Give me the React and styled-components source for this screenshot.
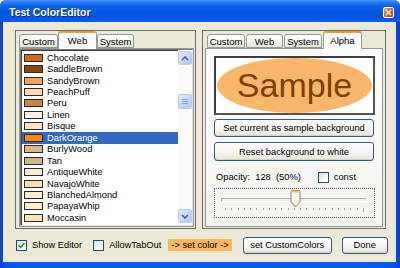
import React from "react";
import styled, { createGlobalStyle } from "styled-components";

const GlobalStyle = createGlobalStyle`
  html, body { margin: 0; padding: 0; background: #ffffff; }
  body {
    font-family: "Liberation Sans", Arial, sans-serif;
    font-size: 9.3px;
    color: #000;
  }
  * { box-sizing: border-box; }
`;

const Window = styled.div`
  width: 400px;
  height: 268px;
  display: flex;
  flex-direction: column;
  background: linear-gradient(90deg, #0a3fd0, #0757e6 2%, #0757e6 98%, #0a3fd0);
  border-radius: 6px 6px 0 0;
  overflow: hidden;
`;

const TitleBar = styled.div`
  height: 22px;
  flex: none;
  display: flex;
  align-items: center;
  justify-content: space-between;
  padding: 0 6px 0 9px;
  background: linear-gradient(
    #4a95fa 0%,
    #2a7cf7 10%,
    #0a61ea 28%,
    #0456e3 55%,
    #0454e2 80%,
    #0a5df0 100%
  );
`;

const Title = styled.span`
  color: #fff;
  font-weight: bold;
  font-size: 10.5px;
  text-shadow: 1px 1px 0 #0b2f8f;
  margin-top: 1px;
`;

const CloseButton = styled.div`
  width: 11px;
  height: 11px;
  margin-top: 2px;
  border: 1px solid #fff;
  border-radius: 2px;
  background: linear-gradient(135deg, #f5a58e, #e05a34 45%, #c9401c);
  display: flex;
  align-items: center;
  justify-content: center;
`;

const Body = styled.div`
  flex: 1;
  margin: 0 4px 6px 3px;
  background: #ece9d8;
  padding: 8px 10px 0 12px;
  display: flex;
  flex-direction: column;
`;

const Panels = styled.div`
  display: flex;
  gap: 6px;
  height: 199px;
`;

const Panel = styled.div`
  width: ${(p) => p.$w}px;
  border: 1px solid #6f6d64;
  padding: 0 ${(p) => p.$pr}px 1px ${(p) => p.$pl}px;
  display: flex;
  flex-direction: column;
`;

const TabStrip = styled.div`
  height: 17px;
  flex: none;
  display: flex;
  align-items: flex-end;
  gap: ${(p) => p.$gap}px;
  padding-left: ${(p) => p.$pl}px;
  position: relative;
  z-index: 1;
`;

const Tab = styled.div`
  width: ${(p) => p.$w}px;
  height: ${(p) => (p.$active ? 18 : 14)}px;
  margin-bottom: ${(p) => (p.$active ? -1 : 0)}px;
  border: 1px solid #919b9c;
  border-bottom: ${(p) => (p.$active ? "none" : "1px solid #919b9c")};
  border-top: ${(p) => (p.$active ? "2px solid #e8a13a" : "1px solid #919b9c")};
  border-radius: 3px 3px 0 0;
  background: ${(p) =>
    p.$active ? "#fcfcfe" : "linear-gradient(#ffffff, #f3f2ec 60%, #e4e2d8)"};
  display: flex;
  align-items: center;
  justify-content: center;
  padding-bottom: ${(p) => (p.$active ? 2 : 0)}px;
  font-size: 9.5px;
`;

const TabPage = styled.div`
  flex: 1;
  border: 1px solid #919b9c;
  background: ${(p) => (p.$plain ? "#fcfcfe" : "linear-gradient(#fcfcfe, #f4f3ee)")};
  display: flex;
  flex-direction: column;
  padding: ${(p) => p.$pad};
`;

const ListBox = styled.div`
  flex: 1;
  display: flex;
  background: #fff;
  border: 1px solid;
  border-color: #7a7868 #e4e2d6 #e4e2d6 #7a7868;
  box-shadow: inset 1px 1px 0 #3f3e38;
`;

const Items = styled.div`
  flex: 1;
  padding-top: 2px;
  padding-left: 1px;
  overflow: hidden;
`;

const Row = styled.div`
  height: 11.45px;
  display: flex;
  align-items: center;
  gap: 4px;
  padding-left: 2px;
  background: ${(p) => (p.$sel ? "#316ac5" : "transparent")};
  color: ${(p) => (p.$sel ? "#fff" : "#000")};
  white-space: nowrap;
`;

const Swatch = styled.span`
  flex: none;
  width: 19px;
  height: 8px;
  border: 1px solid #2a2a2a;
  background: ${(p) => p.$c};
`;

const ScrollBar = styled.div`
  width: 14px;
  flex: none;
  display: flex;
  flex-direction: column;
  background: #fbfbf8;
  padding-top: 1px;
  padding-bottom: 2px;
`;

const ScrollButton = styled.div`
  width: 14px;
  height: 14px;
  flex: none;
  border: 1px solid #b7cbf5;
  border-radius: 2px;
  background: linear-gradient(135deg, #e2ebfd, #c0d3fb 60%, #b2c8f8);
  display: flex;
  align-items: center;
  justify-content: center;
`;

const Thumb = styled(ScrollButton)`
  height: 15px;
  margin-top: ${(p) => p.$top}px;
  margin-bottom: auto;
`;

const SampleBox = styled.div`
  height: 59px;
  flex: none;
  border: 2px solid;
  border-color: #3e3d38 #56554e #56554e #3e3d38;
  background: #fff;
  padding: 0 1px;
  display: flex;
`;

const Ellipse = styled.div`
  flex: 1;
  border-radius: 50%;
  background: #fab76c;
  display: flex;
  align-items: center;
  justify-content: center;
  font-size: 34px;
  color: #7a4100;
  padding-bottom: 1px;
`;

const XpButton = styled.button`
  width: ${(p) => p.$w}px;
  height: ${(p) => p.$h}px;
  margin-top: ${(p) => p.$mt || 0}px;
  margin-left: ${(p) => p.$ml || 0}px;
  flex: none;
  font-family: inherit;
  font-size: 9.3px;
  color: #000;
  padding: 0;
  border: 1px solid #2f5b8e;
  border-radius: 3px;
  background: linear-gradient(#ffffff, #f6f5f1 55%, #e6e3d9);
  box-shadow: inset 0 -1px 0 #d6d0c5;
`;

const OptionRow = styled.div`
  display: flex;
  align-items: center;
  height: 12px;
  margin-top: 10px;
  padding-left: 2px;
`;

const Caption = styled.span`
  white-space: pre;
  font-size: ${(p) => p.$fs || 9.3}px;
`;

const CheckBox = styled.span`
  width: 11px;
  height: 11px;
  flex: none;
  border: 1px solid #1c5180;
  background: linear-gradient(135deg, #dcdbd3, #f6f6f3 60%, #ffffff);
  display: flex;
  align-items: center;
  justify-content: center;
  margin-left: ${(p) => p.$ml || 0}px;
  margin-right: ${(p) => p.$mr || 5}px;
`;

const Trackbar = styled.div`
  height: 30px;
  margin-top: 5px;
  flex: none;
  border: 1px dotted #555;
  position: relative;
  padding: 9px 7px 0 6px;
`;

const Track = styled.div`
  height: 4px;
  border: 1px solid;
  border-color: #b4b3a8 #ffffff #ffffff #b4b3a8;
  background: #f0efe8;
`;

const Ticks = styled.div`
  display: flex;
  justify-content: space-between;
  margin: 6px 3px 0 4px;
`;

const Tick = styled.span`
  width: 1px;
  height: ${(p) => (p.$end ? 4 : 2)}px;
  background: #a8a79d;
`;

const TrackThumb = styled.svg`
  position: absolute;
  left: 75px;
  top: 1px;
`;

const BottomRow = styled.div`
  height: 20px;
  margin-top: 6px;
  display: flex;
  align-items: center;
  padding-left: 1px;
`;

const ColorTag = styled.span`
  height: 12px;
  padding: 0 3px;
  margin-left: 7px;
  background: #fbb661;
  display: flex;
  align-items: center;
  white-space: pre;
`;

const colors = [
  ["Chocolate", "#d2691e"],
  ["SaddleBrown", "#8b4513"],
  ["SandyBrown", "#f4a460"],
  ["PeachPuff", "#ffdab9"],
  ["Peru", "#cd853f"],
  ["Linen", "#faf0e6"],
  ["Bisque", "#ffe4c4"],
  ["DarkOrange", "#ff8c00"],
  ["BurlyWood", "#deb887"],
  ["Tan", "#d2b48c"],
  ["AntiqueWhite", "#faebd7"],
  ["NavajoWhite", "#ffdead"],
  ["BlanchedAlmond", "#ffebcd"],
  ["PapayaWhip", "#ffefd5"],
  ["Moccasin", "#ffe4b5"],
];

function Arrow({ down }) {
  return (
    <svg width="8" height="5" viewBox="0 0 8 5">
      <path
        d={down ? "M1 1 L4 4 L7 1" : "M1 4 L4 1 L7 4"}
        fill="none"
        stroke="#4d6185"
        strokeWidth="1.6"
      />
    </svg>
  );
}

function Check() {
  return (
    <svg width="7" height="7" viewBox="0 0 7 7">
      <path d="M0.5 3.2 L2.6 5.4 L6.5 1" fill="none" stroke="#21a121" strokeWidth="1.6" />
    </svg>
  );
}

function App() {
  const ticks = Array.from({ length: 23 });
  return (
    <>
      <GlobalStyle />
      <Window>
        <TitleBar>
          <Title>Test ColorEditor</Title>
          <CloseButton>
            <svg width="7" height="7" viewBox="0 0 7 7">
              <path d="M1 1 L6 6 M6 1 L1 6" stroke="#fff" strokeWidth="1.5" />
            </svg>
          </CloseButton>
        </TitleBar>
        <Body>
          <Panels>
            <Panel $w={181} $pl={3} $pr={1}>
              <TabStrip $gap={0} $pl={0}>
                <Tab $w={39}>Custom</Tab>
                <Tab $w={39} $active>
                  Web
                </Tab>
                <Tab $w={37}>System</Tab>
              </TabStrip>
              <TabPage $pad="0" $plain>
                <ListBox>
                  <Items>
                    {colors.map(([name, c]) => (
                      <Row key={name} $sel={name === "DarkOrange"}>
                        <Swatch $c={c} />
                        {name}
                      </Row>
                    ))}
                  </Items>
                  <ScrollBar>
                    <ScrollButton>
                      <Arrow />
                    </ScrollButton>
                    <Thumb $top={29}>
                      <svg width="6" height="5" viewBox="0 0 6 5">
                        <path d="M0 0.5 H6 M0 2.5 H6 M0 4.5 H6" stroke="#8faaf0" strokeWidth="1" />
                      </svg>
                    </Thumb>
                    <ScrollButton>
                      <Arrow down />
                    </ScrollButton>
                  </ScrollBar>
                </ListBox>
              </TabPage>
            </Panel>
            <Panel $w={184} $pl={2} $pr={2}>
              <TabStrip $gap={1} $pl={2}>
                <Tab $w={38}>Custom</Tab>
                <Tab $w={37}>Web</Tab>
                <Tab $w={38}>System</Tab>
                <Tab $w={39} $active>
                  Alpha
                </Tab>
              </TabStrip>
              <TabPage $pad="7px 7px 0 8px">
                <SampleBox>
                  <Ellipse>Sample</Ellipse>
                </SampleBox>
                <XpButton $w={160} $h={18} $mt={4}>
                  Set current as sample background
                </XpButton>
                <XpButton $w={160} $h={19} $mt={5}>
                  Reset background to white
                </XpButton>
                <OptionRow>
                  <Caption>Opacity:  128  (50%)</Caption>
                  <CheckBox $ml={17} />
                  <Caption>const</Caption>
                </OptionRow>
                <Trackbar>
                  <Track />
                  <Ticks>
                    {ticks.map((_, i) => (
                      <Tick key={i} $end={i === ticks.length - 1} />
                    ))}
                  </Ticks>
                  <TrackThumb width="11" height="18" viewBox="0 0 11 18">
                    <path
                      d="M1 1.5 Q1 0.5 2 0.5 H9 Q10 0.5 10 1.5 V12 L5.5 17 L1 12 Z"
                      fill="#f5f4ef"
                      stroke="#8c8a80"
                    />
                    <path d="M2 1.5 H9" stroke="#ffc83c" strokeWidth="2" />
                    <path d="M2 12.5 L5.5 16" stroke="#f0a030" strokeWidth="1" />
                  </TrackThumb>
                </Trackbar>
              </TabPage>
            </Panel>
          </Panels>
          <BottomRow>
            <CheckBox>
              <Check />
            </CheckBox>
            <Caption>Show Editor</Caption>
            <CheckBox $ml={11} />
            <Caption>AllowTabOut</Caption>
            <ColorTag>-&gt; set color -&gt;</ColorTag>
            <XpButton $w={89} $h={17} $ml={11}>
              set CustomColors
            </XpButton>
            <XpButton $w={46} $h={17} $ml={10}>
              Done
            </XpButton>
          </BottomRow>
        </Body>
      </Window>
    </>
  );
}

export default App;
